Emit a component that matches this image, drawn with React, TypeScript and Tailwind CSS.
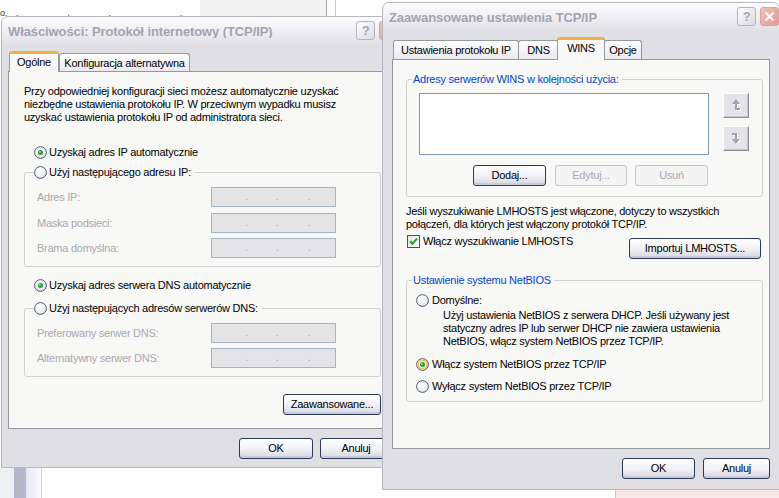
import React from "react";

const font = "font-['Liberation_Sans',Arial,sans-serif]";

function Radio({ checked = false, hot = false }: { checked?: boolean; hot?: boolean }) {
  return (
    <svg width="13" height="13" viewBox="0 0 13 13" className="shrink-0">
      <defs>
        <radialGradient id="radioFill" cx="0.35" cy="0.3" r="0.85">
          <stop offset="0" stopColor="#ffffff" />
          <stop offset="0.6" stopColor="#f1f1f3" />
          <stop offset="1" stopColor="#cfcfd8" />
        </radialGradient>
      </defs>
      <circle cx="6.5" cy="6.5" r="5.9" fill="url(#radioFill)" stroke="#4c5b79" strokeWidth="1" />
      {hot && <circle cx="6.5" cy="6.5" r="4.4" fill="none" stroke="#f3c255" strokeWidth="1.6" />}
      {checked && <circle cx="6.5" cy="6.5" r="2.5" fill="#2c9e2c" />}
      {checked && <circle cx="6" cy="6" r="1" fill="#8edc8e" />}
    </svg>
  );
}

function Checkbox() {
  return (
    <svg width="13" height="13" viewBox="0 0 13 13" className="shrink-0">
      <defs>
        <linearGradient id="checkFill" x1="0" y1="0" x2="1" y2="1">
          <stop offset="0" stopColor="#e4e4ea" />
          <stop offset="1" stopColor="#ffffff" />
        </linearGradient>
      </defs>
      <rect x="0.5" y="0.5" width="12" height="12" fill="url(#checkFill)" stroke="#3f5275" />
      <path d="M3 6.2 L5.4 8.8 L10 3.6" fill="none" stroke="#21a121" strokeWidth="2" />
    </svg>
  );
}

interface BtnProps {
  children: React.ReactNode;
  className?: string;
  disabled?: boolean;
}

function Btn({ children, className = "", disabled = false }: BtnProps) {
  return (
    <div
      className={`flex h-[21px] shrink-0 items-center justify-center rounded-[3px] border ${
        disabled
          ? "border-[#c6c6cc] bg-[#f4f4f4] text-[#a9a9ae]"
          : "border-[#2a3a5a] bg-gradient-to-b from-white via-[#f2f2f6] to-[#d6d6e2] text-black shadow-[inset_0_-2px_0_#c9c9d9]"
      } ${className}`}
    >
      {children}
    </div>
  );
}

function ArrowBtn({ down = false }: { down?: boolean }) {
  return (
    <div className="flex h-[25px] w-[26px] items-center justify-center border border-t-white border-l-white border-r-[#8e8e94] border-b-[#8e8e94] bg-[#e4e4e8] shadow-[inset_-1px_-1px_0_#c4c4ca]">
      <svg width="11" height="13" viewBox="0 0 11 13">
        {down ? (
          <g>
            <path d="M1 1 H6 V7 H9 L5 12 L1 7 H4 V3 H1 Z" fill="#ffffff" transform="translate(1 1)" />
            <path d="M1 1 H6 V7 H9 L5 12 L1 7 H4 V3 H1 Z" fill="#a4a4a8" />
          </g>
        ) : (
          <g>
            <path d="M5 0 L9 5 H6 V9 H9 V11 H4 V5 H1 Z" fill="#ffffff" transform="translate(1 1)" />
            <path d="M5 0 L9 5 H6 V9 H9 V11 H4 V5 H1 Z" fill="#a4a4a8" />
          </g>
        )}
      </svg>
    </div>
  );
}

function TitleBar({ title }: { title: string }) {
  return (
    <div className="flex h-[27px] items-center rounded-t-[6px] bg-gradient-to-b from-[#fdfdfe] via-[#f0f0f3] to-[#e1e1e7] pl-[6px]">
      <span className="flex-1 truncate pt-[1px] text-[13px] font-bold tracking-[-0.1px] text-[#a3a3af]">{title}</span>
      <div className="flex h-[19px] w-[19px] items-center justify-center rounded-[3px] border border-[#b4b4c0] bg-gradient-to-br from-white to-[#dadae2] text-[13px] font-bold text-[#a8a8b2]">
        ?
      </div>
      <div className="ml-[4px] flex h-[19px] w-[19px] items-center justify-center rounded-[3px] border border-[#d9a49e] bg-gradient-to-br from-[#f1c3bb] to-[#e09a90]">
        <svg width="11" height="11" viewBox="0 0 11 11">
          <path d="M1.5 1.5 L9.5 9.5 M9.5 1.5 L1.5 9.5" stroke="#ffffff" strokeWidth="2" />
        </svg>
      </div>
    </div>
  );
}

function Tab({ children, active = false, className = "" }: { children: React.ReactNode; active?: boolean; className?: string }) {
  return active ? (
    <div
      className={`relative z-10 -mb-[1px] flex shrink-0 items-start justify-center rounded-t-[3px] border-x border-t-[3px] border-x-[#919b9c] border-t-[#f0b23c] bg-[#f8f8f7] pt-[2px] ${className}`}
    >
      {children}
    </div>
  ) : (
    <div
      className={`flex shrink-0 items-center justify-center rounded-t-[3px] border border-b-0 border-[#919b9c] bg-gradient-to-b from-white to-[#e9e9ef] pt-[1px] ${className}`}
    >
      {children}
    </div>
  );
}

function IpRow({ label, className = "" }: { label: string; className?: string }) {
  return (
    <div className={`ml-[12px] flex h-[20px] items-center ${className}`}>
      <span className="w-[174px] text-[#a9a8ac]">{label}</span>
      <div className="flex h-[20px] w-[125px] items-end border border-[#a4b4c8] bg-[#e4e4e6] pb-[3px] pl-[33px] text-[#a9a9ad]">
        <span>.</span>
        <span className="ml-[28px]">.</span>
        <span className="ml-[29px]">.</span>
      </div>
    </div>
  );
}

function TcpIpDialog() {
  return (
    <div className="absolute left-[1px] top-[16px] w-[398px] rounded-t-[7px] border border-[#b6b6c2] bg-[#e0dfe3]">
      <TitleBar title="Właściwości: Protokół internetowy (TCP/IP)" />
      <div className="px-[6px] pb-[8px] pt-[7px]">
        <div className="flex h-[20px] items-end">
          <Tab active className="ml-[1px] h-[21px] w-[50px]">Ogólne</Tab>
          <Tab className="h-[18px] w-[131px]">Konfiguracja alternatywna</Tab>
        </div>
        <div className="h-[358px] border border-[#919b9c] bg-[#f8f8f7] pl-[15px]">
          <p className="mt-[13px]">
            Przy odpowiedniej konfiguracji sieci możesz automatycznie uzyskać
            <br />
            niezbędne ustawienia protokołu IP. W przeciwnym wypadku musisz
            <br />
            uzyskać ustawienia protokołu IP od administratora sieci.
          </p>
          <div className="ml-[10px] mt-[22px] flex h-[13px] items-center gap-[2px]">
            <Radio checked />
            <span>Uzyskaj adres IP automatycznie</span>
          </div>
          <fieldset className="mt-[7px] w-[357px] rounded-[3px] border border-[#d0d0cf] pb-[8px]">
            <legend className="ml-[9px] pr-[4px]">
              <span className="flex h-[13px] items-center gap-[2px]">
                <Radio />
                Użyj następującego adresu IP:
              </span>
            </legend>
            <IpRow label="Adres IP:" className="mt-[8px]" />
            <IpRow label="Maska podsieci:" className="mt-[6px]" />
            <IpRow label="Brama domyślna:" className="mt-[5px]" />
          </fieldset>
          <div className="ml-[10px] mt-[12px] flex h-[13px] items-center gap-[2px]">
            <Radio checked />
            <span>Uzyskaj adres serwera DNS automatycznie</span>
          </div>
          <fieldset className="mt-[10px] w-[357px] rounded-[3px] border border-[#d0d0cf] pb-[8px]">
            <legend className="ml-[9px] pr-[4px]">
              <span className="flex h-[13px] items-center gap-[2px]">
                <Radio />
                Użyj następujących adresów serwerów DNS:
              </span>
            </legend>
            <IpRow label="Preferowany serwer DNS:" className="mt-[8px]" />
            <IpRow label="Alternatywny serwer DNS:" className="mt-[5px]" />
          </fieldset>
          <div className="mt-[17px] flex w-[357px] justify-end">
            <Btn className="w-[98px]">Zaawansowane...</Btn>
          </div>
        </div>
        <div className="mt-[9px] flex justify-end gap-[7px]">
          <Btn className="w-[74px]">OK</Btn>
          <Btn className="w-[72px]">Anuluj</Btn>
        </div>
      </div>
    </div>
  );
}

function AdvancedDialog() {
  return (
    <div className="absolute left-[382px] top-[2px] w-[398px] rounded-t-[7px] border border-[#b6b6c2] bg-[#e0dfe3]">
      <TitleBar title="Zaawansowane ustawienia TCP/IP" />
      <div className="px-[9px] pb-[10px] pt-[7px]">
        <div className="flex h-[22px] items-end">
          <Tab className="ml-[1px] h-[19px] w-[126px]">Ustawienia protokołu IP</Tab>
          <Tab className="-ml-[1px] h-[19px] w-[41px]">DNS</Tab>
          <Tab active className="-ml-[2px] h-[23px] w-[48px]">WINS</Tab>
          <Tab className="-ml-[1px] h-[19px] w-[38px]">Opcje</Tab>
        </div>
        <div className="h-[390px] border border-[#919b9c] bg-[#f8f8f7] pl-[13px]">
          <fieldset className="mt-[13px] w-[357px] rounded-[3px] border border-[#d0d0cf] pb-[10px]">
            <legend className="ml-[5px] pl-[1px] pr-[3px] text-[#0046d5]">Adresy serwerów WINS w kolejności użycia:</legend>
            <div className="mt-[7px] flex">
              <div className="ml-[12px] h-[62px] w-[290px] border border-[#7f9db9] bg-white" />
              <div className="ml-[14px] flex flex-col gap-[8px]">
                <ArrowBtn />
                <ArrowBtn down />
              </div>
            </div>
            <div className="mt-[10px] flex">
              <Btn className="ml-[66px] w-[73px]">Dodaj...</Btn>
              <Btn disabled className="ml-[9px] w-[72px]">Edytuj...</Btn>
              <Btn disabled className="ml-[8px] w-[73px]">Usuń</Btn>
            </div>
          </fieldset>
          <p className="mt-[8px]">
            Jeśli wyszukiwanie LMHOSTS jest włączone, dotyczy to wszystkich
            <br />
            połączeń, dla których jest włączony protokół TCP/IP.
          </p>
          <div className="mt-[4px] flex w-[357px] items-start">
            <div className="ml-[1px] flex h-[13px] items-center gap-[3px]">
              <Checkbox />
              <span>Włącz wyszukiwanie LMHOSTS</span>
            </div>
            <Btn className="ml-auto mr-[2px] mt-[3px] w-[132px]">Importuj LMHOSTS...</Btn>
          </div>
          <fieldset className="mt-[15px] w-[357px] rounded-[3px] border border-[#d0d0cf] pb-[8px]">
            <legend className="ml-[5px] pl-[1px] pr-[3px] text-[#0046d5]">Ustawienie systemu NetBIOS</legend>
            <div className="ml-[9px] mt-[7px] flex h-[13px] items-center gap-[3px]">
              <Radio />
              <span>Domyślne:</span>
            </div>
            <p className="ml-[36px] mt-[2px]">
              Użyj ustawienia NetBIOS z serwera DHCP. Jeśli używany jest
              <br />
              statyczny adres IP lub serwer DHCP nie zawiera ustawienia
              <br />
              NetBIOS, włącz system NetBIOS przez TCP/IP.
            </p>
            <div className="ml-[9px] mt-[10px] flex h-[13px] items-center gap-[3px]">
              <Radio checked hot />
              <span>Włącz system NetBIOS przez TCP/IP</span>
            </div>
            <div className="ml-[9px] mt-[9px] flex h-[13px] items-center gap-[3px]">
              <Radio />
              <span>Wyłącz system NetBIOS przez TCP/IP</span>
            </div>
          </fieldset>
        </div>
        <div className="mt-[9px] flex justify-end gap-[8px]">
          <Btn className="w-[73px]">OK</Btn>
          <Btn className="w-[67px]">Anuluj</Btn>
        </div>
      </div>
    </div>
  );
}

export default function App() {
  return (
    <div className={`relative h-[498px] w-[779px] overflow-hidden bg-white text-[11px] leading-[13px] tracking-[-0.25px] text-black ${font}`}>
      {/* bits of the desktop and other windows */}
      <div className="absolute left-0 top-[10px] flex gap-[9px] text-[9px] leading-[6px] text-[#333]">
        <span>o.</span>
        <span>.</span>
        <span className="ml-[40px]">.</span>
        <span className="ml-[30px]">.</span>
        <span className="ml-[60px]">.</span>
      </div>
      <div className="absolute left-[200px] top-0 h-[16px] w-[126px] bg-[#f3f3f3]" />
      <div className="absolute left-[326px] top-0 h-[16px] w-[1px] bg-[#a9a9ad]" />
      <div className="absolute left-[335px] top-0 h-[16px] w-[1px] bg-[#c9c9cd]" />
      <div className="absolute left-0 top-[468px] flex h-[30px]">
        <div className="w-[14px] bg-[#eef0f6]" />
        <div className="w-[12px] bg-[#b5b7cc]" />
        <div className="w-[16px] border-r border-[#d6d6de] bg-gradient-to-r from-[#e6e7f2] to-[#fbfbfe]" />
      </div>
      <div className="absolute left-[615px] top-[490px] h-[8px] w-[164px] border-l border-[#c8c8cc] bg-[#f9eaea]" />

      <TcpIpDialog />
      <AdvancedDialog />
    </div>
  );
}
